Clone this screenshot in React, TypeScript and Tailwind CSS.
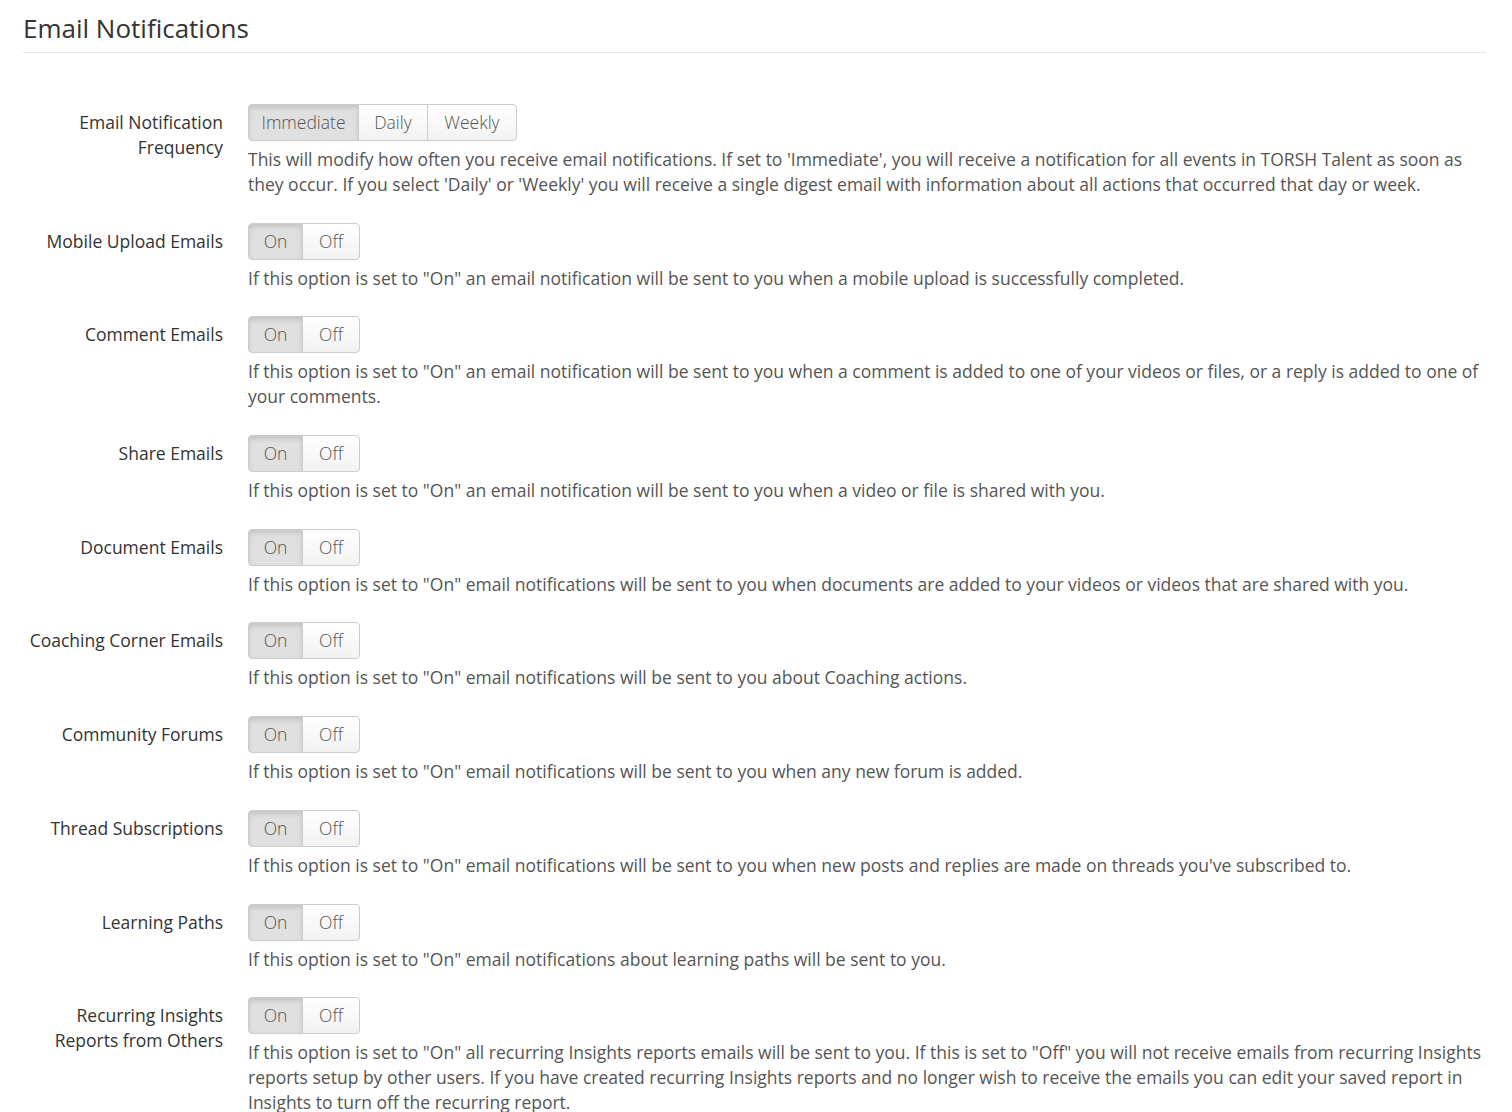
import React from "react";

type Row = {
  label: React.ReactNode;
  options: string[];
  desc: string;
};

const onOff = ["On", "Off"];

const rows: Row[] = [
  {
    label: (
      <>
        Email Notification
        <br />
        Frequency
      </>
    ),
    options: ["Immediate", "Daily", "Weekly"],
    desc: "This will modify how often you receive email notifications. If set to 'Immediate', you will receive a notification for all events in TORSH Talent as soon as they occur. If you select 'Daily' or 'Weekly' you will receive a single digest email with information about all actions that occurred that day or week.",
  },
  {
    label: "Mobile Upload Emails",
    options: onOff,
    desc: 'If this option is set to "On" an email notification will be sent to you when a mobile upload is successfully completed.',
  },
  {
    label: "Comment Emails",
    options: onOff,
    desc: 'If this option is set to "On" an email notification will be sent to you when a comment is added to one of your videos or files, or a reply is added to one of your comments.',
  },
  {
    label: "Share Emails",
    options: onOff,
    desc: 'If this option is set to "On" an email notification will be sent to you when a video or file is shared with you.',
  },
  {
    label: "Document Emails",
    options: onOff,
    desc: 'If this option is set to "On" email notifications will be sent to you when documents are added to your videos or videos that are shared with you.',
  },
  {
    label: "Coaching Corner Emails",
    options: onOff,
    desc: 'If this option is set to "On" email notifications will be sent to you about Coaching actions.',
  },
  {
    label: "Community Forums",
    options: onOff,
    desc: 'If this option is set to "On" email notifications will be sent to you when any new forum is added.',
  },
  {
    label: "Thread Subscriptions",
    options: onOff,
    desc: 'If this option is set to "On" email notifications will be sent to you when new posts and replies are made on threads you\'ve subscribed to.',
  },
  {
    label: "Learning Paths",
    options: onOff,
    desc: 'If this option is set to "On" email notifications about learning paths will be sent to you.',
  },
  {
    label: (
      <>
        Recurring Insights
        <br />
        Reports from Others
      </>
    ),
    options: onOff,
    desc: 'If this option is set to "On" all recurring Insights reports emails will be sent to you. If this is set to "Off" you will not receive emails from recurring Insights reports setup by other users. If you have created recurring Insights reports and no longer wish to receive the emails you can edit your saved report in Insights to turn off the recurring report.',
  },
];

// widths measured off the design
const btnWidth: Record<string, string> = {
  Immediate: "w-[111px]",
  Daily: "w-[70px]",
  Weekly: "w-[90px]",
  On: "w-[55px]",
  Off: "w-[58px]",
};

function ButtonGroup({ options }: { options: string[] }) {
  return (
    <div className="inline-flex">
      {options.map((opt, i) => {
        const active = i === 0;
        const last = i === options.length - 1;
        return (
          <button
            key={opt}
            className={
              btnWidth[opt] +
              " py-[5px] border border-[#cccccc] text-center text-[17.5px] leading-[25px] font-light text-[#555555] " +
              (i === 0 ? "rounded-l-[4px] " : "-ml-px ") +
              (last ? "rounded-r-[4px] " : "") +
              (active
                ? "bg-[#e0e0e0] shadow-[inset_0_3px_5px_rgba(0,0,0,0.125)]"
                : "bg-gradient-to-b from-white to-[#f2f2f2]")
            }
          >
            {opt}
          </button>
        );
      })}
    </div>
  );
}

export default function App() {
  return (
    <div
      className="min-h-screen bg-white pl-[23px] pr-[26px]"
      style={{ fontFamily: '"Open Sans", sans-serif' }}
    >
      <h1 className="pt-[12px] pb-[8px] text-[26px] leading-[32px] font-normal text-[#333333] border-b border-[#e5e5e5]">
        Email Notifications
      </h1>

      <div className="mt-[51px] grid grid-cols-[200px_1fr] gap-x-[25px]">
        {rows.map((row, idx) => (
          <React.Fragment key={idx}>
            <div className="pt-[6px] text-right text-[17.5px] leading-[25px] text-[#333333]">
              {row.label}
            </div>
            <div className="mb-[25.7px]">
              <ButtonGroup options={row.options} />
              <p className="mt-[6px] text-[17.5px] leading-[25px] text-[#555555]">
                {row.desc}
              </p>
            </div>
          </React.Fragment>
        ))}
      </div>
    </div>
  );
}
